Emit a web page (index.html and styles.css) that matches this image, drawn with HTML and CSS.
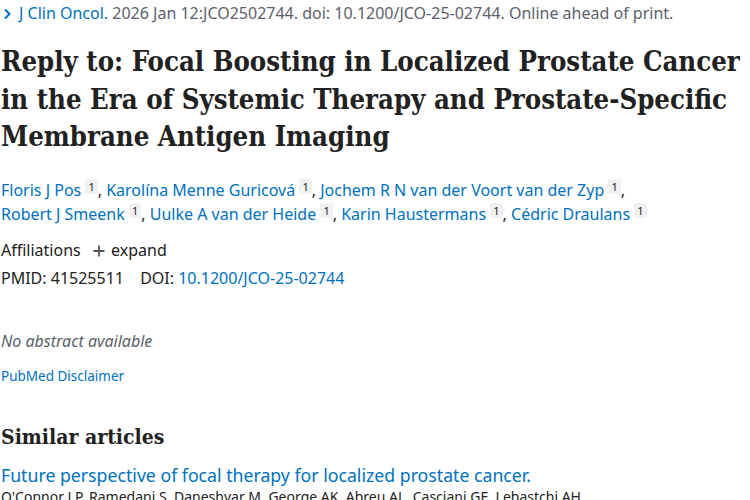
FILE: index.html
```html
<!DOCTYPE html>
<html>
<head>
<meta charset="utf-8">
<link rel="stylesheet" href="styles.css">
</head>
<body>
<main class="article">
  <div class="cite"><svg class="chev" width="9" height="12" viewBox="0 0 9 12"><path d="M2 1.5 L6.5 6 L2 10.5" fill="none" stroke="#0071bc" stroke-width="2"/></svg><a class="link" href="#">J Clin Oncol.</a> 2026 Jan 12:JCO2502744. doi: 10.1200/JCO-25-02744. Online ahead of print.</div>
  <h1 class="title">Reply to: Focal Boosting in Localized Prostate Cancer in the Era of Systemic Therapy and Prostate-Specific Membrane Antigen Imaging</h1>
  <div class="authors">
    <span class="author"><a class="link" href="#">Floris J Pos</a> <sup class="aff">1</sup>,</span>
    <span class="author"><a class="link" href="#">Karolína Menne Guricová</a> <sup class="aff">1</sup>,</span>
    <span class="author"><a class="link" href="#">Jochem R N van der Voort van der Zyp</a> <sup class="aff">1</sup>,</span>
    <span class="author"><a class="link" href="#">Robert J Smeenk</a> <sup class="aff">1</sup>,</span>
    <span class="author"><a class="link" href="#">Uulke A van der Heide</a> <sup class="aff">1</sup>,</span>
    <span class="author"><a class="link" href="#">Karin Haustermans</a> <sup class="aff">1</sup>,</span>
    <span class="author"><a class="link" href="#">Cédric Draulans</a> <sup class="aff">1</sup></span>
  </div>
  <div class="affil">Affiliations <span class="expand"><svg class="plus" width="12" height="12" viewBox="0 0 12 12"><path d="M6 0.5 V11.5 M0.5 6 H11.5" stroke="#555" stroke-width="1.8"/></svg> expand</span></div>
  <div class="ids">PMID: 41525511 <span class="doi">DOI: <a class="link" href="#">10.1200/JCO-25-02744</a></span></div>
  <p class="noabs">No abstract available</p>
  <a class="disclaimer link" href="#">PubMed Disclaimer</a>
  <h2 class="similar">Similar articles</h2>
  <a class="sim-title link" href="#">Future perspective of focal therapy for localized prostate cancer.</a>
  <div class="sim-authors">O'Connor LP, Ramedani S, Daneshvar M, George AK, Abreu AL, Casciani GE, Lebastchi AH</div>
</main>
</body>
</html>
```
FILE: styles.css
```css
html, body { margin: 0; padding: 0; background: #fff; }
body {
  font-family: "Noto Sans", "Open Sans", sans-serif;
  color: #212121;
  font-size: 16px;
  height: 500px;
  overflow: hidden;
}
.article { padding: 0 0 0 1px; }
a.link { color: #0071bc; text-decoration: none; }
.cite {
  color: #5b616b;
  font-size: 16px;
  line-height: 20px;
  padding-top: 3px;
  white-space: nowrap;
}
.cite .chev { margin: 0 7px 0 2px; vertical-align: -1px; }
.title {
  font-family: "DejaVu Serif Condensed", "DejaVu Serif", serif;
  font-weight: bold;
  font-size: 27.3px;
  line-height: 37.5px;
  margin: 20px 0 0 0;
  color: #212121;
}
.authors {
  margin-top: 22px;
  line-height: 24px;
}
.author { white-space: nowrap; }
.aff {
  font-size: 11px;
  background: #f1f1f1;
  color: #212121;
  padding: 0 3px;
  border-radius: 2px;
  vertical-align: 5px;
  line-height: 14px;
}
.affil { margin-top: 12px; line-height: 24px; }
.expand { margin-left: 8px; }
.plus { vertical-align: -1px; margin-right: 2px; }
.ids { margin-top: 4px; line-height: 24px; }
.doi { margin-left: 12px; }
.noabs { font-style: italic; color: #5b616b; margin: 39px 0 0 0; line-height: 24px; }
.disclaimer { display: block; font-size: 13.5px; margin-top: 13px; line-height: 20px; }
.similar {
  font-family: "DejaVu Serif Condensed", "DejaVu Serif", serif;
  font-weight: bold;
  font-size: 21px;
  margin: 36px 0 0 0;
  line-height: 30px;
}
.sim-title { display: block; font-size: 17.7px; margin-top: 11px; line-height: 24px; }
.sim-authors { font-size: 14px; color: #212121; line-height: 18px; margin-top: 1px; white-space: nowrap; }
```
